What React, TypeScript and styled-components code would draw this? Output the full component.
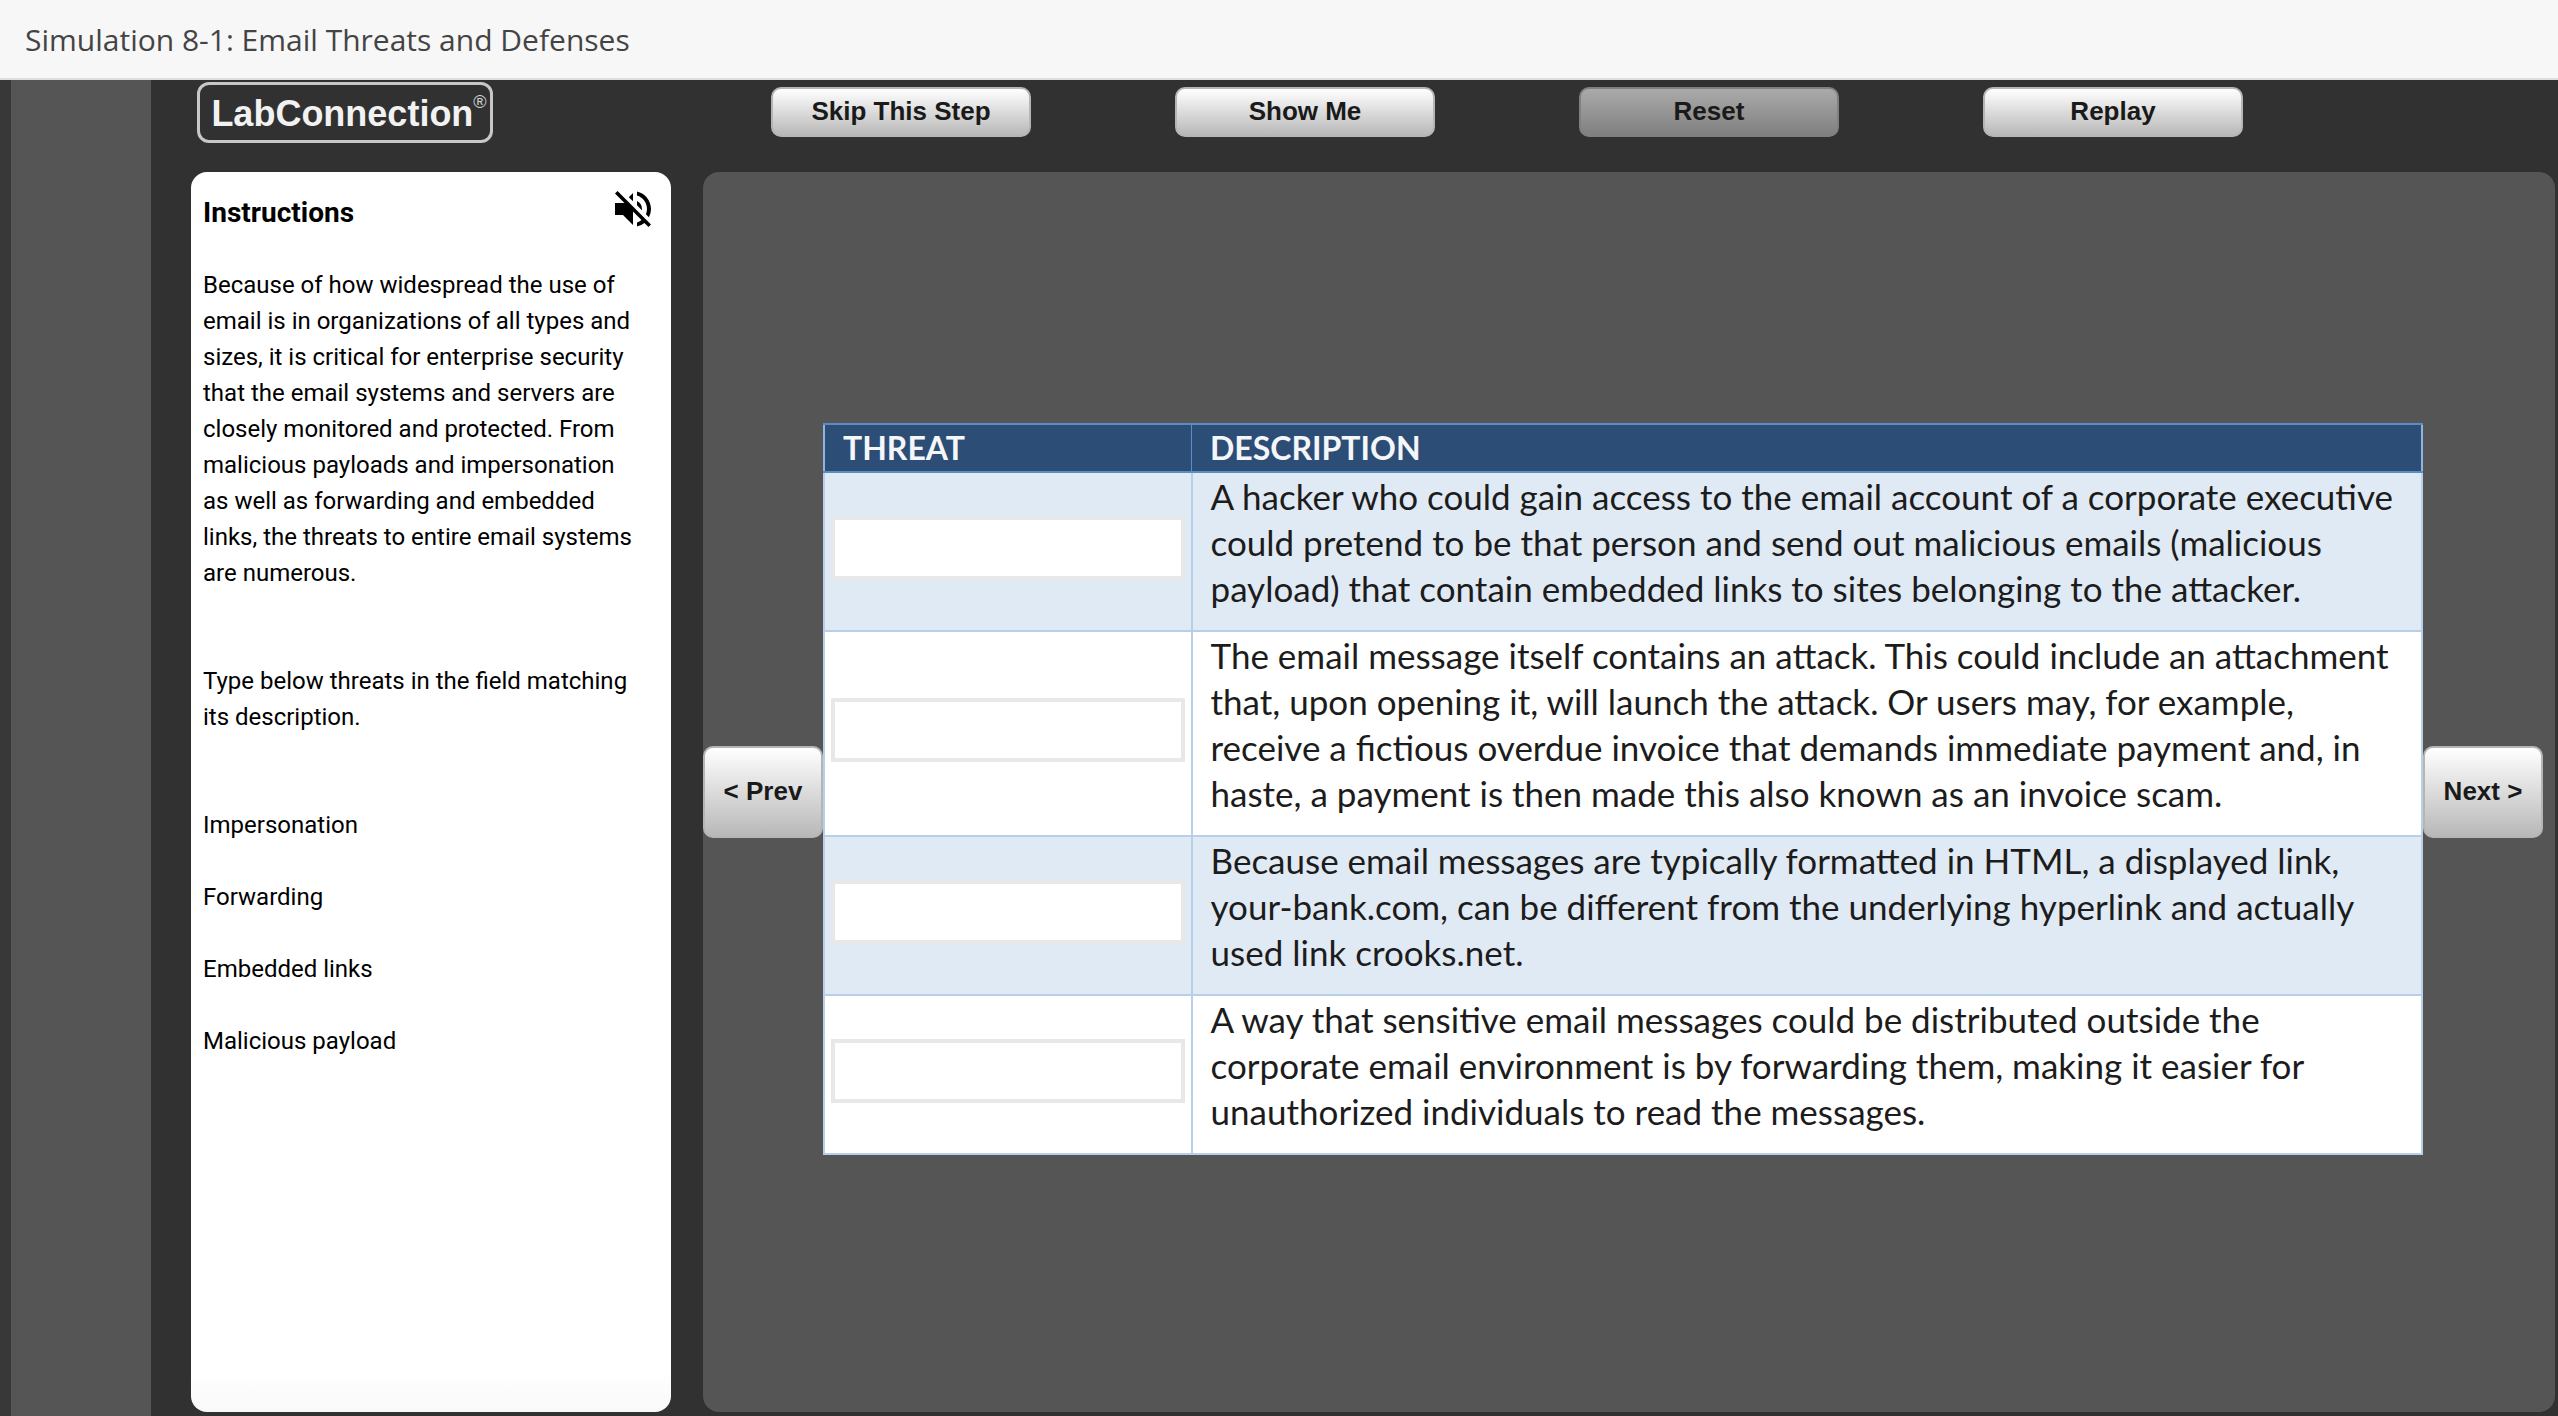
import React from "react";
import styled, { createGlobalStyle, css } from "styled-components";
import { MdVolumeOff } from "react-icons/md";

const uiFont = css`
  font-family: "Liberation Sans", Arial, sans-serif;
`;

const GlobalStyle = createGlobalStyle`
  *, *::before, *::after { box-sizing: border-box; }
  body { margin: 0; background: #383838; }
  h1, h2, p { margin: 0; }
`;

const Page = styled.div`
  display: flex;
  flex-direction: column;
  min-height: 100vh;
`;

const TitleBar = styled.header`
  display: flex;
  align-items: center;
  height: 80px;
  padding: 2px 25px 0;
  background: #f7f7f7;
  border-bottom: 2px solid #dddddd;
`;

const Title = styled.h1`
  font: 400 30px/40px "Open Sans", "Noto Sans", sans-serif;
  color: #444444;
`;

const Stage = styled.div`
  display: flex;
  flex: 1;
  padding-left: 11px;
  background: #383838;
`;

const Rail = styled.div`
  flex: 0 0 140px;
  background: #555555;
`;

const Player = styled.div`
  display: flex;
  flex-direction: column;
  flex: 1;
  min-width: 0;
  padding: 0 3px 4px 40px;
  background: #313131;
`;

const Toolbar = styled.div`
  display: flex;
  height: 92px;
`;

const LogoSlot = styled.div`
  flex: 0 0 508px;
  padding: 2px 0 0 6px;
`;

const Logo = styled.div`
  display: flex;
  align-items: center;
  justify-content: center;
  width: 296px;
  height: 61px;
  padding: 2px 0 0 8px;
  border: 3px solid #c8c8c8;
  border-radius: 12px;
  ${uiFont}
  font-size: 36px;
  font-weight: 700;
  line-height: 40px;
  color: #f2f2f2;
`;

const Registered = styled.sup`
  align-self: flex-start;
  font-size: 18px;
  font-weight: 400;
  line-height: 30px;
  color: #d0d0d0;
`;

const Actions = styled.nav`
  display: grid;
  grid-template-columns: repeat(4, 1fr);
  flex: 1;
  justify-items: center;
  padding: 7px 240px 0 0;
`;

const PushButton = styled.button<{ $tall?: boolean }>`
  flex: none;
  width: ${(p) => (p.$tall ? 120 : 260)}px;
  height: ${(p) => (p.$tall ? 92 : 50)}px;
  padding: 0 0 2px;
  border: 2px solid #b5b5b5;
  border-radius: 10px;
  background: linear-gradient(#ffffff, #b8b8b8);
  ${uiFont}
  font-size: 26px;
  font-weight: 700;
  line-height: 30px;
  color: #1a1a1a;
  &:disabled {
    border-color: #808080;
    background: linear-gradient(#aaaaaa, #808080);
  }
`;

const Workspace = styled.div`
  display: flex;
  flex: 1;
  gap: 32px;
`;

const Instructions = styled.aside`
  flex: 0 0 480px;
  padding: 13px 12px;
  border-radius: 16px;
  background: linear-gradient(to top, #f9f9f9, #ffffff 40px);
  font: 400 24px/36px Roboto, sans-serif;
  color: #000000;
`;

const InstructionsHead = styled.div`
  display: flex;
  align-items: flex-start;
  justify-content: space-between;
  margin-bottom: 26px;
`;

const InstructionsTitle = styled.h2`
  font-size: 28px;
  font-weight: 700;
  line-height: 56px;
`;

const MuteButton = styled.button`
  display: flex;
  padding: 0;
  border: 0;
  margin-right: 2px;
  background: none;
  color: #000000;
`;

const Paragraph = styled.p`
  margin-bottom: 72px;
  padding-right: 24px;
`;

const ThreatList = styled.div`
  display: grid;
  gap: 36px;
`;

const Panel = styled.main`
  display: flex;
  align-items: center;
  flex: 1;
  min-width: 0;
  padding-right: 12px;
  border-radius: 16px;
  background: #555555;
`;

const ThreatTable = styled.table`
  flex: 1;
  min-width: 0;
  margin-bottom: 6px;
  table-layout: fixed;
  border-collapse: collapse;
  border: 2px solid #8fb4df;
  background: #ffffff;
  font: 400 35px/46px Lato, "Noto Sans", sans-serif;
  color: #1c1c1c;
`;

const HeadCell = styled.th<{ $narrow?: boolean }>`
  width: ${(p) => (p.$narrow ? "23%" : "auto")};
  padding: 0 18px;
  border: 2px solid #5b8cc6;
  border-left-width: 1px;
  border-right-width: 1px;
  background: #2c4d75;
  font-size: 32px;
  font-weight: 700;
  text-align: left;
  color: #f4f6f9;
`;

const Row = styled.tr`
  background: #ffffff;
  &:nth-child(odd) {
    background: #e0eaf4;
  }
`;

const FieldCell = styled.td`
  padding: 0 6px 8px;
  border: 2px solid #b9cfe9;
`;

const DescriptionCell = styled.td`
  padding: 0 18px 19px;
  border: 2px solid #b9cfe9;
  vertical-align: top;
`;

const Line = styled.span`
  display: block;
  white-space: nowrap;
`;

const Field = styled.input`
  display: block;
  width: 100%;
  height: 64px;
  padding: 0 12px;
  border: 4px solid #e8e8e8;
  border-radius: 0;
  background: #ffffff;
  font: inherit;
`;

const threats = ["Impersonation", "Forwarding", "Embedded links", "Malicious payload"];

const descriptions = [
  [
    "A hacker who could gain access to the email account of a corporate executive",
    "could pretend to be that person and send out malicious emails (malicious",
    "payload) that contain embedded links to sites belonging to the attacker.",
  ],
  [
    "The email message itself contains an attack. This could include an attachment",
    "that, upon opening it, will launch the attack. Or users may, for example,",
    "receive a fictious overdue invoice that demands immediate payment and, in",
    "haste, a payment is then made this also known as an invoice scam.",
  ],
  [
    "Because email messages are typically formatted in HTML, a displayed link,",
    "your-bank.com, can be different from the underlying hyperlink and actually",
    "used link crooks.net.",
  ],
  [
    "A way that sensitive email messages could be distributed outside the",
    "corporate email environment is by forwarding them, making it easier for",
    "unauthorized individuals to read the messages.",
  ],
];

export default function App() {
  return (
    <Page>
      <GlobalStyle />
      <TitleBar>
        <Title>Simulation 8-1: Email Threats and Defenses</Title>
      </TitleBar>
      <Stage>
        <Rail />
        <Player>
          <Toolbar>
            <LogoSlot>
              <Logo>
                LabConnection<Registered>®</Registered>
              </Logo>
            </LogoSlot>
            <Actions>
              <PushButton>Skip This Step</PushButton>
              <PushButton>Show Me</PushButton>
              <PushButton disabled>Reset</PushButton>
              <PushButton>Replay</PushButton>
            </Actions>
          </Toolbar>
          <Workspace>
            <Instructions>
              <InstructionsHead>
                <InstructionsTitle>Instructions</InstructionsTitle>
                <MuteButton aria-label="Unmute">
                  <MdVolumeOff size={48} />
                </MuteButton>
              </InstructionsHead>
              <Paragraph>
                Because of how widespread the use of email is in organizations of all types and
                sizes, it is critical for enterprise security that the email systems and servers are
                closely monitored and protected. From malicious payloads and impersonation as well as
                forwarding and embedded links, the threats to entire email systems are numerous.
              </Paragraph>
              <Paragraph>Type below threats in the field matching its description.</Paragraph>
              <ThreatList>
                {threats.map((t) => (
                  <p key={t}>{t}</p>
                ))}
              </ThreatList>
            </Instructions>
            <Panel>
              <PushButton $tall>&lt; Prev</PushButton>
              <ThreatTable>
                <thead>
                  <tr>
                    <HeadCell $narrow scope="col">THREAT</HeadCell>
                    <HeadCell scope="col">DESCRIPTION</HeadCell>
                  </tr>
                </thead>
                <tbody>
                  {descriptions.map((lines, i) => (
                    <Row key={i}>
                      <FieldCell>
                        <Field
                          type="text"
                          aria-label="Threat"
                          aria-describedby={`description-${i}`}
                        />
                      </FieldCell>
                      <DescriptionCell id={`description-${i}`}>
                        {lines.map((line) => (
                          <Line key={line}>{line} </Line>
                        ))}
                      </DescriptionCell>
                    </Row>
                  ))}
                </tbody>
              </ThreatTable>
              <PushButton $tall>Next &gt;</PushButton>
            </Panel>
          </Workspace>
        </Player>
      </Stage>
    </Page>
  );
}
